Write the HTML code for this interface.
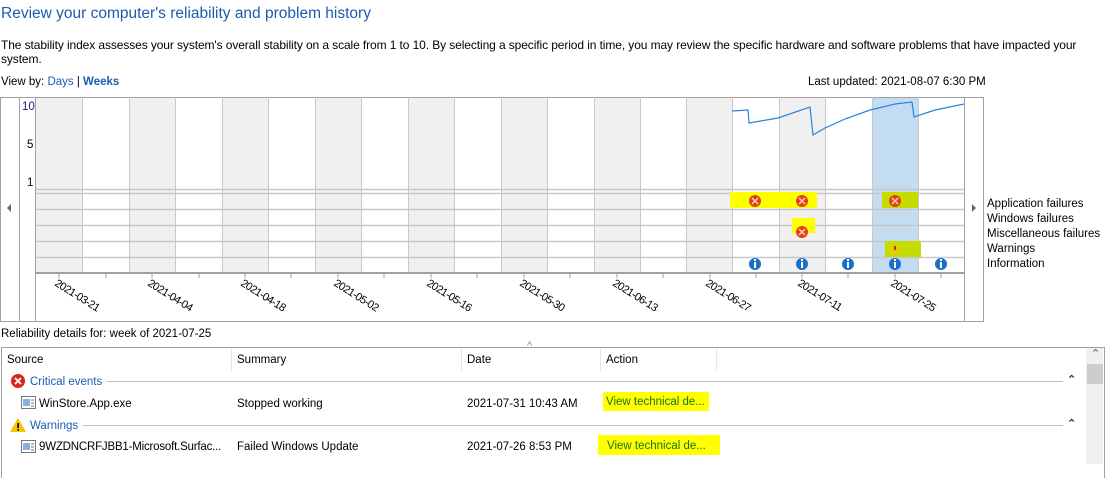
<!DOCTYPE html>
<html><head><meta charset="utf-8"><style>
body{margin:0;width:1113px;height:464px;overflow:hidden;background:#fff;font-family:"Liberation Sans",sans-serif;font-size:11.5px;color:#000;position:relative}
.a{position:absolute;white-space:nowrap}
.blue{color:#1a5fb4}
.h{color:#1c5bb0;font-size:15.5px}
.hl{background:#ffff00;color:#1f6e1f}
</style></head><body>
<div class="a h" style="left:1px;top:5px">Review your computer's reliability and problem history</div>
<div class="a" style="left:1px;top:38px;white-space:normal;width:1105px;line-height:14px;font-size:12px;letter-spacing:-0.1px">The stability index assesses your system's overall stability on a scale from 1 to 10. By selecting a specific period in time, you may review the specific hardware and software problems that have impacted your system.</div>
<div class="a" style="left:1px;top:76px">View by: <span class="blue">Days</span> | <b class="blue">Weeks</b></div>
<div class="a" style="left:808px;top:76px">Last updated: 2021-08-07 6:30 PM</div>

<svg class="a" style="left:0;top:0" width="1113" height="340">
<rect x="0.5" y="97.5" width="983" height="224" fill="#fff" stroke="#a0a0a0"/>
<line x1="19.5" y1="97" x2="19.5" y2="321" stroke="#a0a0a0"/>
<line x1="35.5" y1="97" x2="35.5" y2="321" stroke="#a0a0a0"/>
<line x1="964.5" y1="97" x2="964.5" y2="321" stroke="#a0a0a0"/>
<g fill="#f0f0f0">
<rect x="36" y="98" width="46" height="175"/><rect x="129" y="98" width="46" height="175"/><rect x="222" y="98" width="46" height="175"/><rect x="315" y="98" width="46" height="175"/><rect x="408" y="98" width="46" height="175"/><rect x="501" y="98" width="46" height="175"/><rect x="594" y="98" width="46" height="175"/><rect x="686" y="98" width="46" height="175"/><rect x="779" y="98" width="46" height="175"/>
</g>
<rect x="872" y="98" width="46" height="175" fill="#c3dcf2"/>
<g stroke="#c8c8c8" stroke-width="1">
<line x1="82.5" y1="97" x2="82.5" y2="273"/><line x1="129.5" y1="97" x2="129.5" y2="273"/><line x1="175.5" y1="97" x2="175.5" y2="273"/><line x1="222.5" y1="97" x2="222.5" y2="273"/><line x1="268.5" y1="97" x2="268.5" y2="273"/><line x1="315.5" y1="97" x2="315.5" y2="273"/><line x1="361.5" y1="97" x2="361.5" y2="273"/><line x1="408.5" y1="97" x2="408.5" y2="273"/><line x1="454.5" y1="97" x2="454.5" y2="273"/><line x1="501.5" y1="97" x2="501.5" y2="273"/><line x1="547.5" y1="97" x2="547.5" y2="273"/><line x1="594.5" y1="97" x2="594.5" y2="273"/><line x1="640.5" y1="97" x2="640.5" y2="273"/><line x1="686.5" y1="97" x2="686.5" y2="273"/><line x1="732.5" y1="97" x2="732.5" y2="273"/><line x1="779.5" y1="97" x2="779.5" y2="273"/><line x1="825.5" y1="97" x2="825.5" y2="273"/><line x1="872.5" y1="97" x2="872.5" y2="273"/><line x1="918.5" y1="97" x2="918.5" y2="273"/>
</g>
<g stroke="#c8c8c8" stroke-width="1.5">
<line x1="36" y1="189.5" x2="964" y2="189.5"/><line x1="36" y1="193.5" x2="964" y2="193.5"/>
<line x1="36" y1="209.5" x2="964" y2="209.5"/><line x1="36" y1="225.5" x2="964" y2="225.5"/><line x1="36" y1="241.5" x2="964" y2="241.5"/><line x1="36" y1="257.5" x2="964" y2="257.5"/>
</g>
<line x1="36" y1="273" x2="964" y2="273" stroke="#a0a0a0" stroke-width="2"/>
<g stroke="#a0a0a0"><line x1="59" y1="273" x2="59" y2="278"/><line x1="106" y1="273" x2="106" y2="278"/><line x1="152" y1="273" x2="152" y2="278"/><line x1="199" y1="273" x2="199" y2="278"/><line x1="245" y1="273" x2="245" y2="278"/><line x1="291" y1="273" x2="291" y2="278"/><line x1="338" y1="273" x2="338" y2="278"/><line x1="384" y1="273" x2="384" y2="278"/><line x1="431" y1="273" x2="431" y2="278"/><line x1="477" y1="273" x2="477" y2="278"/><line x1="524" y1="273" x2="524" y2="278"/><line x1="570" y1="273" x2="570" y2="278"/><line x1="617" y1="273" x2="617" y2="278"/><line x1="663" y1="273" x2="663" y2="278"/><line x1="710" y1="273" x2="710" y2="278"/><line x1="756" y1="273" x2="756" y2="278"/><line x1="802" y1="273" x2="802" y2="278"/><line x1="848" y1="273" x2="848" y2="278"/><line x1="895" y1="273" x2="895" y2="278"/><line x1="941" y1="273" x2="941" y2="278"/></g>
<g font-family="Liberation Sans" font-size="11.5" fill="#000">
<text x="22" y="110" fill="#1a1a80">10</text><text x="27" y="148">5</text><text x="27" y="186">1</text>
</g>
<g font-family="Liberation Sans" font-size="11" fill="#000" letter-spacing="-0.6">
<text transform="translate(54,285) rotate(32)">2021-03-21</text>
<text transform="translate(147,285) rotate(32)">2021-04-04</text>
<text transform="translate(240,285) rotate(32)">2021-04-18</text>
<text transform="translate(333,285) rotate(32)">2021-05-02</text>
<text transform="translate(426,285) rotate(32)">2021-05-16</text>
<text transform="translate(519,285) rotate(32)">2021-05-30</text>
<text transform="translate(612,285) rotate(32)">2021-06-13</text>
<text transform="translate(705,285) rotate(32)">2021-06-27</text>
<text transform="translate(797,285) rotate(32)">2021-07-11</text>
<text transform="translate(890,285) rotate(32)">2021-07-25</text>
</g>
<polyline fill="none" stroke="#2b82d9" stroke-width="1.2" points="732,111 748,110 749,123 778,118 810,107 813,135 825,128 845,119 870,110 895,104 912,102 914,117 935,110 964,104"/>
<path d="M11 204 L7 208 L11 212Z" fill="#666"/>
<path d="M972 204 L976 208 L972 212Z" fill="#666"/>
<g fill="#ffff00"><rect x="730" y="192" width="49" height="16"/><rect x="779" y="192" width="38" height="16"/><rect x="792" y="218" width="23" height="15"/></g>
<g fill="#c6dc00"><rect x="882" y="192" width="36" height="16"/><rect x="885" y="241" width="36" height="16"/></g>
<g><circle cx="755" cy="201" r="6" fill="#e0401e"/><circle cx="802" cy="201" r="6" fill="#e0401e"/><circle cx="895" cy="201" r="6" fill="#e0401e"/><circle cx="802" cy="232" r="6" fill="#e0401e"/></g>
<g stroke="#ffd0a0" stroke-width="1.5"><path d="M752 198l6 6M758 198l-6 6M799 198l6 6M805 198l-6 6M892 198l6 6M898 198l-6 6M799 229l6 6M805 229l-6 6"/></g>
<path d="M895 243 L901 253 L889 253Z" fill="#f5c400"/><rect x="894.5" y="246" width="1" height="4" fill="#000"/>
<g fill="#1a6fc8"><circle cx="755" cy="264" r="6"/><circle cx="802" cy="264" r="6"/><circle cx="848" cy="264" r="6"/><circle cx="895" cy="264" r="6"/><circle cx="941" cy="264" r="6"/></g>
<g fill="#fff"><rect x="754" y="262" width="2" height="6"/><rect x="801" y="262" width="2" height="6"/><rect x="847" y="262" width="2" height="6"/><rect x="894" y="262" width="2" height="6"/><rect x="940" y="262" width="2" height="6"/><rect x="754" y="259" width="2" height="2"/><rect x="801" y="259" width="2" height="2"/><rect x="847" y="259" width="2" height="2"/><rect x="894" y="259" width="2" height="2"/><rect x="940" y="259" width="2" height="2"/></g>
<g font-family="Liberation Sans" font-size="11.5" fill="#000"><text x="987" y="207">Application failures</text><text x="987" y="222">Windows failures</text><text x="987" y="237">Miscellaneous failures</text><text x="987" y="252">Warnings</text><text x="987" y="267">Information</text></g>
</svg>

<div class="a" style="left:1px;top:328px">Reliability details for: week of 2021-07-25</div>
<div class="a" style="left:1px;top:347px;width:1102px;height:130px;border:1px solid #a0a0a0;border-bottom:none"></div>
<div class="a" style="left:527px;top:340px;color:#888;font-size:11px">^</div>
<div class="a" style="left:7px;top:354px">Source</div>
<div class="a" style="left:237px;top:354px">Summary</div>
<div class="a" style="left:467px;top:354px">Date</div>
<div class="a" style="left:606px;top:354px">Action</div>
<div class="a" style="left:231px;top:348px;width:1px;height:23px;background:#e5e5e5"></div>
<div class="a" style="left:461px;top:348px;width:1px;height:23px;background:#e5e5e5"></div>
<div class="a" style="left:600px;top:348px;width:1px;height:23px;background:#e5e5e5"></div>
<div class="a" style="left:716px;top:348px;width:1px;height:23px;background:#e5e5e5"></div>
<div class="a" style="left:1086px;top:348px;width:17px;height:116px;background:#f0f0f0"></div>
<div class="a" style="left:1087px;top:364px;width:16px;height:20px;background:#cdcdcd"></div>
<div class="a" style="left:1091px;top:347px;font-size:11px;color:#555">&#8963;</div>
<svg class="a" style="left:10px;top:373px" width="18" height="18"><circle cx="8" cy="8" r="7" fill="#d9261c"/><path d="M5 5l6 6M11 5l-6 6" stroke="#fff" stroke-width="1.8"/></svg>
<div class="a blue" style="left:30px;top:376px">Critical events</div>
<div class="a" style="left:107px;top:381px;width:956px;height:1px;background:#b4bfd4"></div>
<div class="a" style="left:1067px;top:373px;color:#1a3f8a;font-size:11px;font-weight:bold">&#8963;</div>
<svg class="a" style="left:21px;top:396px" width="16" height="14"><rect x="0.5" y="0.5" width="14" height="12" fill="#fff" stroke="#777"/><rect x="2" y="3" width="7" height="7" fill="#8ab0d8"/><path d="M10 4h3M10 7h3M10 10h3" stroke="#777"/></svg>
<div class="a" style="left:39px;top:398px">WinStore.App.exe</div>
<div class="a" style="left:237px;top:398px">Stopped working</div>
<div class="a" style="left:467px;top:398px">2021-07-31 10:43 AM</div>
<div class="a hl" style="left:603px;top:392px;height:19px;padding:4px 0 0 3px;box-sizing:border-box;width:106px">View technical de...</div>
<svg class="a" style="left:10px;top:417px" width="18" height="16"><path d="M8 1L16 15H0Z" fill="#f7c400"/><rect x="7.3" y="6" width="1.6" height="5"/><rect x="7.3" y="12" width="1.6" height="1.6"/></svg>
<div class="a blue" style="left:30px;top:420px">Warnings</div>
<div class="a" style="left:83px;top:425px;width:980px;height:1px;background:#b4bfd4"></div>
<div class="a" style="left:1067px;top:417px;color:#1a3f8a;font-size:11px;font-weight:bold">&#8963;</div>
<svg class="a" style="left:21px;top:440px" width="16" height="14"><rect x="0.5" y="0.5" width="14" height="12" fill="#fff" stroke="#777"/><rect x="2" y="3" width="7" height="7" fill="#8ab0d8"/><path d="M10 4h3M10 7h3M10 10h3" stroke="#777"/></svg>
<div class="a" style="left:39px;top:441px;letter-spacing:-0.2px">9WZDNCRFJBB1-Microsoft.Surfac...</div>
<div class="a" style="left:237px;top:441px">Failed Windows Update</div>
<div class="a" style="left:467px;top:441px">2021-07-26 8:53 PM</div>
<div class="a hl" style="left:598px;top:435px;height:20px;width:122px;padding:5px 0 0 9px;box-sizing:border-box">View technical de...</div>
</body></html>
